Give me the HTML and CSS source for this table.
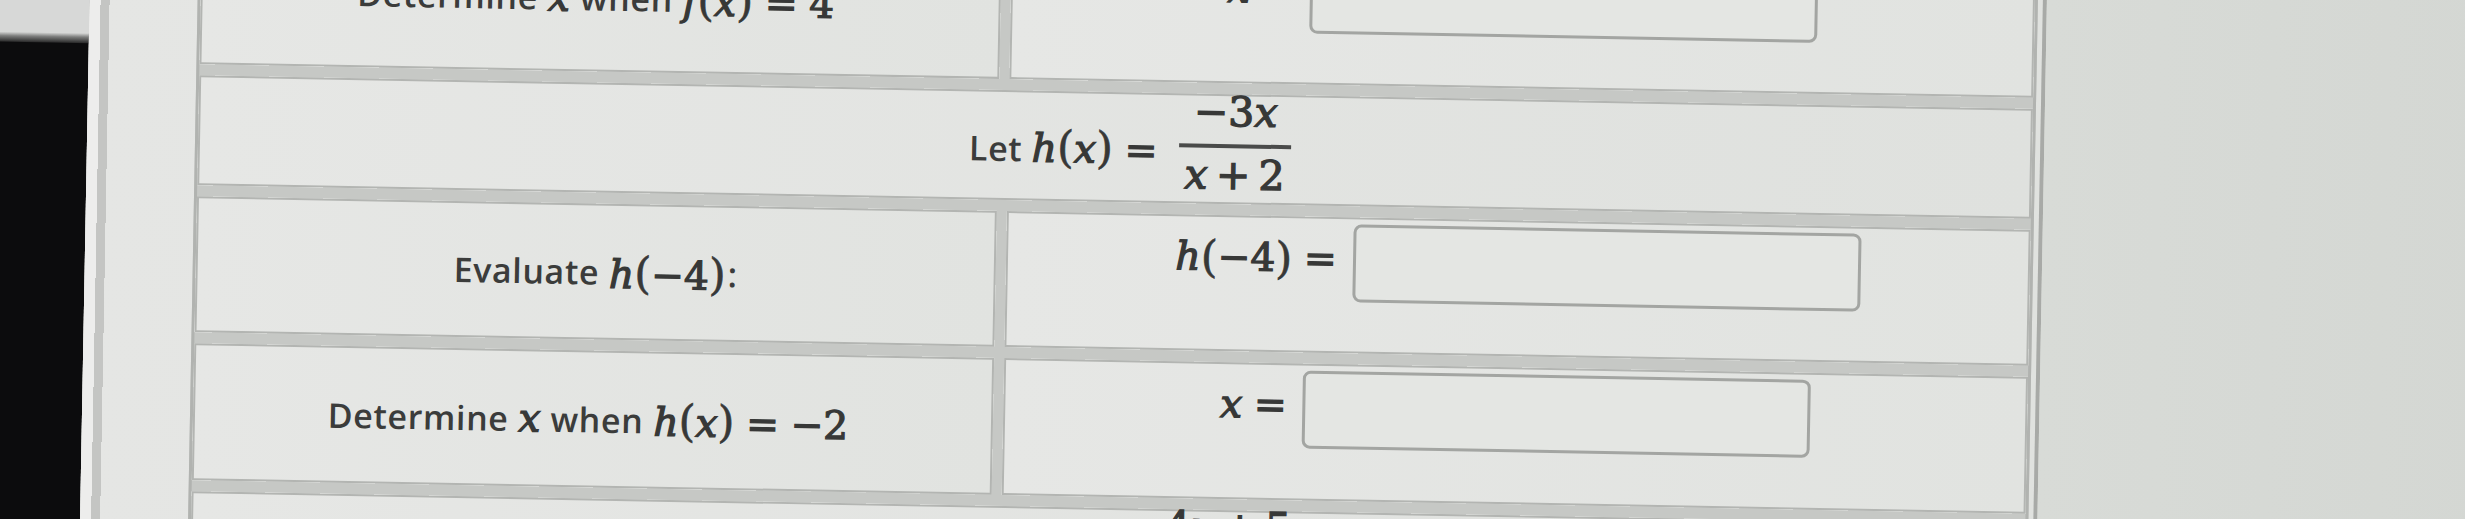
FILE: index.html
```html
<!DOCTYPE html>
<html lang="en">
<head>
<meta charset="utf-8">
<title>Function table</title>
<link rel="stylesheet" href="styles.css">
</head>
<body>
<div class="photo">
  <div class="bezel"><div class="bezel-top"></div></div>
  <div class="page">
    <div class="sheet">
      <div class="cell prompt first">Determine <span class="m"><i>x</i></span> when <span class="m"><i>f</i><span class="p">(</span><i>x</i><span class="p">)</span><span class="rel">=</span>4</span></div>
      <div class="cell answer"><span class="lbl m"><i>x</i><span class="rel">=</span></span><span class="box"></span></div>

      <div class="cell full def"><span class="lead">Let <span class="m"><i>h</i><span class="p">(</span><i>x</i><span class="p">)</span><span class="rel">=</span></span></span><span class="frac"><span class="num">−3<i>x</i></span><span class="den"><i>x</i><span class="op">+</span>2</span></span></div>

      <div class="cell prompt">Evaluate <span class="m tight"><i>h</i><span class="p">(</span>−4<span class="p">)</span></span>:</div>
      <div class="cell answer"><span class="lbl m"><i>h</i><span class="p">(</span>−4<span class="p">)</span><span class="rel">=</span></span><span class="box"></span></div>

      <div class="cell prompt">Determine <span class="m"><i>x</i></span> when <span class="m"><i>h</i><span class="p">(</span><i>x</i><span class="p">)</span><span class="rel">=</span>−2</span></div>
      <div class="cell answer"><span class="lbl m"><i>x</i><span class="rel">=</span></span><span class="box"></span></div>

      <div class="cell full def tail"><span class="lead">Let <span class="m"><i>g</i><span class="p">(</span><i>x</i><span class="p">)</span><span class="rel">=</span></span></span><span class="frac"><span class="num">4<i>x</i><span class="op">+</span>5</span><span class="den"><i>x</i><span class="op">−</span>1</span></span></div>
    </div>
  </div>
  <div class="side"></div>
</div>
</body>
</html>
```

FILE: styles.css
```css
html, body {
  margin: 0;
  padding: 0;
}
body {
  width: 2465px;
  height: 519px;
  overflow: hidden;
  background: #d6d8d5;
}
.photo {
  display: flex;
  width: 2525px;
  height: 660px;
  margin: -70px 0 0 -30px;
  transform: rotate(1.05deg);
  transform-origin: 1143px 330px;
}
.bezel {
  width: 115px;
  flex: none;
  background: #0c0c0d;
}
.bezel-top {
  height: 132px;
  background: linear-gradient(to bottom, #8e908f 0 6px, #d7d8d7 6px 122px, #7d7e7d 126px, #2a2a2a 132px);
}
.page {
  flex: none;
  width: 1957px;
  padding: 12px 5px 0 108px;
  box-sizing: border-box;
  border-right: 4px solid #a8aaa7;
  background:
    linear-gradient(to right, #ededec 0 11px, #c4c5c3 11px 20px, transparent 20px),
    linear-gradient(to right, #e5e6e4, #e0e2df);
  overflow: hidden;
}
.side {
  flex: 1;
  background: linear-gradient(to right, #d8dbd7, #d4d7d3);
}
.sheet {
  display: grid;
  grid-template-columns: 800px 1024px;
  grid-template-rows: 136px 110px 136px 137px 140px;
  gap: 11px 10px;
  width: 1834px;
  border: 3px solid #b1b3b0;
  background: #c6c8c5;
  color: #3b3c3b;
  font-family: "Open Sans", "Liberation Sans", sans-serif;
  font-weight: 600;
  font-size: 34px;
  letter-spacing: 0.6px;
}
.cell {
  background: linear-gradient(to right, #e6e7e5, #e1e3e0);
  box-shadow: inset 0 0 0 2px #b3b5b2;
  display: flex;
  align-items: center;
  justify-content: center;
}
.first {
  padding-bottom: 12px;
}
.full {
  grid-column: 1 / -1;
  background: linear-gradient(to right, #e6e7e5, #dfe1de);
}
.def {
  padding-left: 30px;
}
.lead .m {
  margin-left: 0;
}
.tail {
  align-items: flex-start;
  padding-top: 0;
}
.tail .lead {
  padding-top: 40px;
}
.answer {
  align-items: flex-start;
  padding-top: 7px;
  gap: 16px;
}
.lbl {
  height: 68px;
  display: flex;
  align-items: center;
}
.box {
  width: 508px;
  height: 78px;
  box-sizing: border-box;
  border: 3px solid #a3a5a2;
  border-radius: 8px;
  background: #e4e6e3;
}
.m {
  font-family: "DejaVu Serif", "Liberation Serif", serif;
  font-weight: 400;
  font-size: 39px;
  letter-spacing: 0;
  color: #373837;
  margin: 0 10px 0 10px;
  -webkit-text-stroke: 1.3px #373837;
}
.m.tight {
  margin-right: 2px;
}
.lbl.m {
  margin: 0;
}
.m i {
  font-style: italic;
}
.p {
  font-size: 1.12em;
  -webkit-text-stroke: 0.6px #373837;
}
.rel {
  margin: 0 0.3em;
}
.lbl .rel {
  margin-right: 0;
}
.frac {
  display: inline-flex;
  flex-direction: column;
  align-items: center;
  font-family: "DejaVu Serif", "Liberation Serif", serif;
  font-weight: 400;
  font-size: 41px;
  letter-spacing: 0;
  color: #373837;
  -webkit-text-stroke: 1.3px #373837;
  line-height: 1.05;
  margin-top: -10px;
}
.tail .frac {
  margin-top: -4px;
}
.frac i {
  font-style: italic;
}
.num {
  padding: 0 8px 10px;
}
.den {
  padding: 6px 6px 0;
  border-top: 4px solid #4a4b4a;
  width: 100%;
  text-align: center;
  box-sizing: border-box;
}
.op {
  margin: 0 0.2em;
}
```
